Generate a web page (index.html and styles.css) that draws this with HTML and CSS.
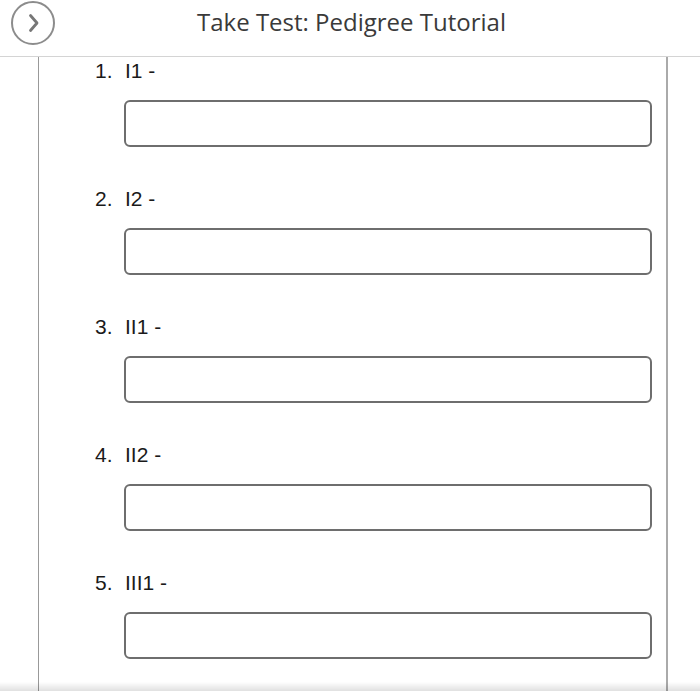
FILE: index.html
```html
<!DOCTYPE html>
<html>
<head>
<meta charset="utf-8">
<link rel="stylesheet" href="styles.css">
</head>
<body>
<header class="topbar">
  <button class="nav-btn" aria-label="Next">
    <svg width="22" height="22" viewBox="0 0 22 22"><path d="M8.5 3.5 L15 11 L8.5 18.5" fill="none" stroke="#777" stroke-width="2.8" stroke-linecap="round" stroke-linejoin="round"/></svg>
  </button>
  <h1 class="title">Take Test: Pedigree Tutorial</h1>
</header>
<main class="panel">
  <div class="item">
    <div class="q"><span class="num">1.</span><span class="label">I1 -</span></div>
    <div class="answer"></div>
  </div>
  <div class="item">
    <div class="q"><span class="num">2.</span><span class="label">I2 -</span></div>
    <div class="answer"></div>
  </div>
  <div class="item">
    <div class="q"><span class="num">3.</span><span class="label">II1 -</span></div>
    <div class="answer"></div>
  </div>
  <div class="item">
    <div class="q"><span class="num">4.</span><span class="label">II2 -</span></div>
    <div class="answer"></div>
  </div>
  <div class="item">
    <div class="q"><span class="num">5.</span><span class="label">III1 -</span></div>
    <div class="answer"></div>
  </div>
</main>
<div class="bottom-shade"></div>
</body>
</html>
```
FILE: styles.css
```css
html, body {
  margin: 0;
  padding: 0;
  background: #fff;
  height: 691px;
  overflow: hidden;
}
.topbar {
  height: 56px;
  border-bottom: 1px solid #d4d4d4;
  display: flex;
  align-items: flex-start;
  position: relative;
  box-sizing: content-box;
}
.nav-btn {
  margin: 1px 0 0 11px;
  width: 44px;
  height: 44px;
  border-radius: 50%;
  border: 2px solid #8c8c8c;
  background: #fff;
  padding: 0;
  display: flex;
  align-items: center;
  justify-content: center;
  box-sizing: border-box;
}
.title {
  flex: 1;
  margin: 0;
  padding-right: 52px;
  text-align: center;
  font-family: "Open Sans", sans-serif;
  font-weight: 400;
  font-size: 24px;
  line-height: 44px;
  color: #3a3a3a;
}
.panel {
  margin: 0 0 0 38px;
  width: 627px;
  height: 640px;
  border-left: 1px solid #999;
  border-right: 2px solid #aaa;
  padding-top: 2px;
  display: flex;
  flex-direction: column;
  gap: 40px;
}
.item {
  display: flex;
  flex-direction: column;
}
.q {
  display: flex;
  font-family: "Liberation Sans", Arial, sans-serif;
  font-size: 21px;
  line-height: 24px;
  color: #1a1a1a;
  padding-left: 56px;
}
.num {
  width: 30px;
}
.answer {
  margin: 17px 14px 0 85px;
  height: 47px;
  border: 2px solid #6e6e6e;
  border-radius: 6px;
  box-sizing: border-box;
  background: #fff;
}
.bottom-shade {
  position: fixed;
  left: 0;
  right: 0;
  bottom: 0;
  height: 9px;
  background: linear-gradient(to bottom, rgba(0,0,0,0), rgba(0,0,0,0.12));
}
```
